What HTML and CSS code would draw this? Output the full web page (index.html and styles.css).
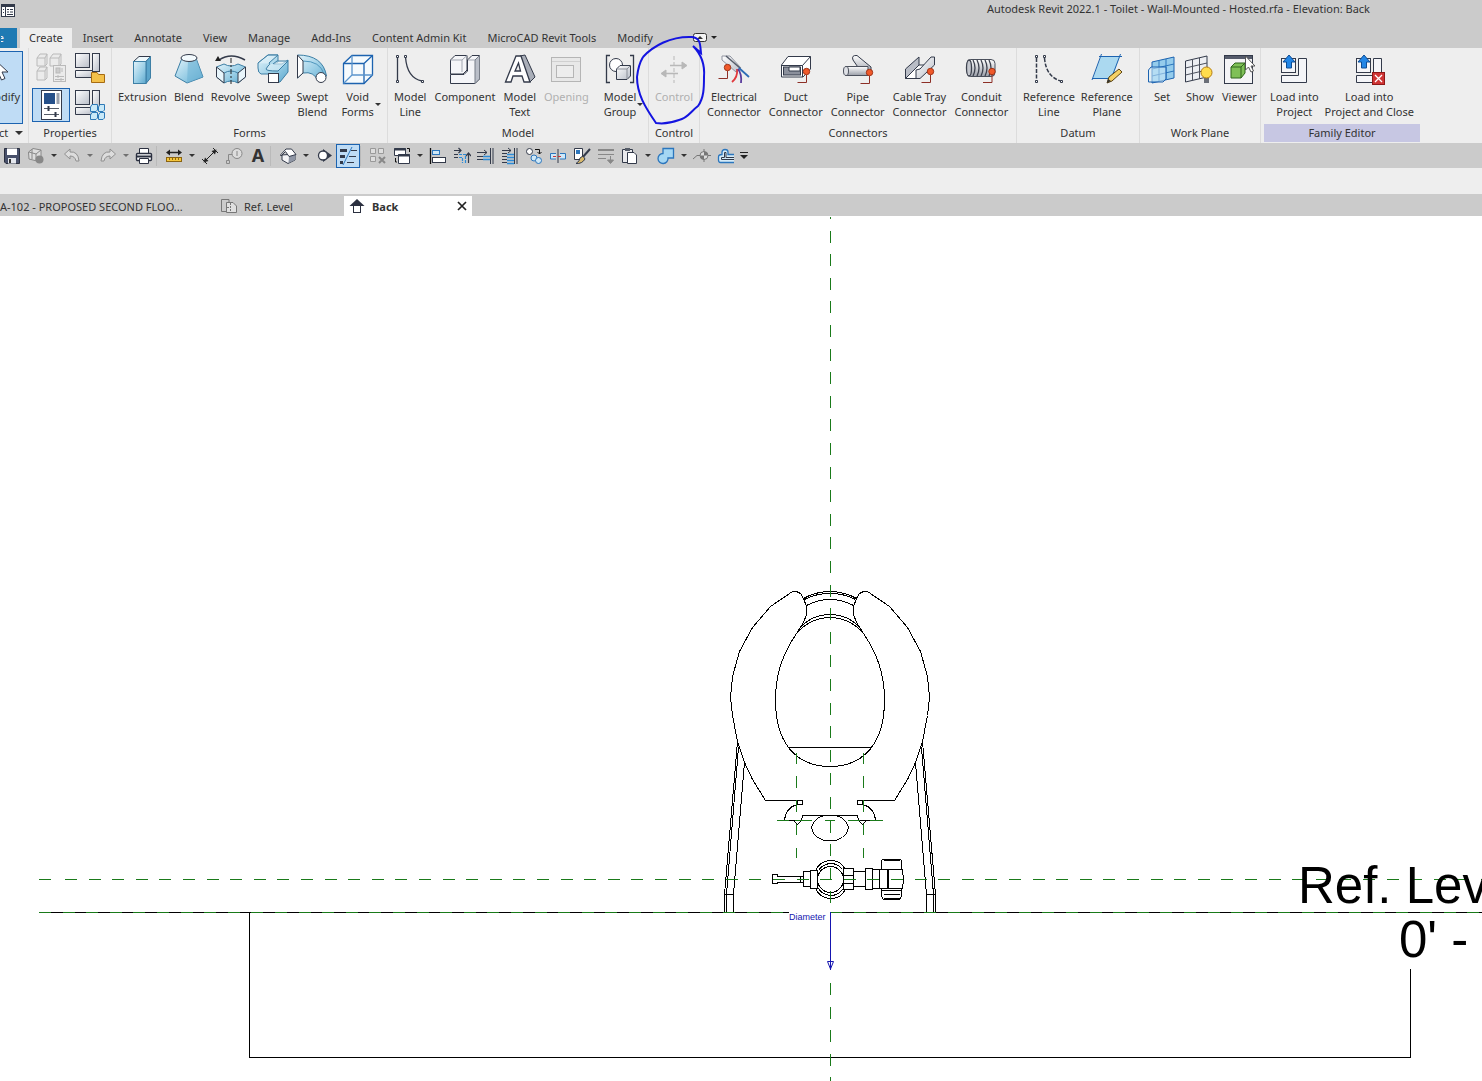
FILE: index.html
```
<!DOCTYPE html>
<html lang="en">
<head>
    <meta charset="UTF-8">
    <meta name="viewport" content="width=device-width, initial-scale=1.0">
    <title>Autodesk Revit 2022.1 - Toilet - Wall-Mounted - Hosted.rfa - Elevation: Back</title>
    <link rel="stylesheet" href="styles.css">
</head>
<body>
    <!-- shared gradients and the connector pin -->
    <svg class="defs" width="0" height="0" aria-hidden="true">
        <defs>
            <linearGradient id="blue" x1="0" y1="0" x2="1" y2="1">
                <stop offset="0" stop-color="#e2f3fa"/>
                <stop offset="0.6" stop-color="#94cbe4"/>
                <stop offset="1" stop-color="#5ca7cd"/>
            </linearGradient>
            <linearGradient id="grey" x1="0" y1="0" x2="1" y2="1">
                <stop offset="0" stop-color="#ffffff"/>
                <stop offset="1" stop-color="#b9bec8"/>
            </linearGradient>
            <linearGradient id="tube" x1="0" y1="0" x2="0" y2="1">
                <stop offset="0" stop-color="#ffffff"/>
                <stop offset="1" stop-color="#9a9ea8"/>
            </linearGradient>
            <g id="pin">
                <path d="M0 3V11H-9" fill="none" stroke="#8d2f26"/>
                <circle r="3.2" fill="#f0592a" stroke="#a03418"/>
            </g>
        </defs>
    </svg>

    <header class="title-bar">
        <svg class="app-icon" width="14" height="14" viewBox="0 0 14 14"><rect x="0.5" y="0.5" width="13" height="12" fill="#fff" stroke="#333a4a"/><path d="M0 2H14" stroke="#333a4a" stroke-width="2"/><path d="M4.500 3V13" stroke="#333a4a"/><path d="M2 5.500H3M2 8.500H3M6 5.500H8M9 5.500H12M6 8H8M9 8H12M6 10.500H12" stroke="#333a4a"/></svg>
        <span>Autodesk Revit 2022.1 - Toilet - Wall-Mounted - Hosted.rfa - Elevation: Back</span>
    </header>

    <nav class="ribbon-tabs">
        <button class="ribbon-tab file">File</button>
        <button class="ribbon-tab active">Create</button>
        <button class="ribbon-tab">Insert</button>
        <button class="ribbon-tab">Annotate</button>
        <button class="ribbon-tab">View</button>
        <button class="ribbon-tab">Manage</button>
        <button class="ribbon-tab">Add-Ins</button>
        <button class="ribbon-tab">Content Admin Kit</button>
        <button class="ribbon-tab">MicroCAD Revit Tools</button>
        <button class="ribbon-tab">Modify</button>
        <button class="ribbon-toggle" aria-label="Minimize ribbon">
            <svg width="24" height="10" viewBox="0 0 24 10"><rect x="0.5" y="0.5" width="13" height="8" rx="2" fill="#f4f4f4" stroke="#333"/><path d="M4 6L7 3L10 6Z" fill="#333"/><path d="M18 3H24L21 6Z" fill="#222"/></svg>
        </button>
    </nav>

    <main class="ribbon">
        <section class="panel select">
            <div class="tools">
                <button class="tool checked">
                    <svg width="32" height="32" viewBox="0 0 32 32"><path d="M8 6V24L12.500 20L15.500 27L19 25.500L16 19H22Z" fill="#fff" stroke="#333a4a"/></svg>
                    <span>Modify</span>
                </button>
            </div>
            <h2>Select <i class="caret wide"></i></h2>
        </section>

        <section class="panel properties">
            <div class="tools">
                <button class="small-tool" aria-label="Type properties" disabled>
                    <svg width="32" height="32" viewBox="0 0 32 32"><g fill="#ebebeb" stroke="#bababa"><path d="M2 6L5 2H12V12L10 14H2ZM15 6L18 2H26V12L24 14H15ZM2 19L5 15H12V26L10 28H2Z"/><path d="M2 6H10V14M10 6L12 2M15 6H24V14M24 6L26 2M2 19H10V28M10 19L12 15" fill="none"/><rect x="18.500" y="13.500" width="12" height="16"/><path d="M20 24.500H29M20 27.500H29M23 23V26M26 26V29M27 16V20"/><rect x="21" y="16" width="4" height="5" fill="#ccc"/></g></svg>
                </button>
                <button class="small-tool" aria-label="Family category">
                    <svg width="32" height="32" viewBox="0 0 32 32"><g fill="url(#grey)" stroke="#333a4a"><rect x="1.500" y="1.500" width="14" height="14"/><rect x="18.500" y="1.500" width="7" height="18"/><path d="M1.500 18.500H18.500V25.500H1.500Z"/></g><path d="M17.500 20.500H23L24.500 22.500H30.500V30.500H17.500Z" fill="#f4c14a" stroke="#a66b12"/></svg>
                </button>
                <button class="small-tool checked" aria-label="Properties">
                    <svg width="32" height="32" viewBox="0 0 32 32"><rect x="6.500" y="1.500" width="20" height="29" fill="#fff" stroke="#333a4a"/><rect x="9" y="4" width="11" height="11" fill="#25508a"/><rect x="21.500" y="4" width="3" height="11" fill="#9aa1ad"/><path d="M9 19.500H24M9 25.500H24" stroke="#555c68"/><path d="M13.500 17V22M20.500 23V28" stroke="#333a4a" stroke-width="2"/></svg>
                </button>
                <button class="small-tool" aria-label="Family types">
                    <svg width="32" height="32" viewBox="0 0 32 32"><g fill="url(#grey)" stroke="#333a4a"><rect x="1.500" y="1.500" width="14" height="14"/><rect x="18.500" y="1.500" width="7" height="18"/><path d="M1.500 18.500H18.500V25.500H1.500Z"/></g><g fill="#c9e9f8" stroke="#2e7ab8"><path d="M16.500 18L18 15.500H23.500V21L22 22.500H16.500ZM24.500 18L26 15.500H30.500V21L29 22.500H24.500ZM16.500 26L18 23.500H23.500V29L22 30.500H16.500ZM24.500 26L26 23.500H30.500V29L29 30.500H24.500Z"/></g></svg>
                </button>
            </div>
            <h2>Properties</h2>
        </section>

        <section class="panel forms">
            <div class="tools">
                <button class="tool">
                    <svg width="32" height="32" viewBox="0 0 32 32"><path d="M7.500 8.500L13 3.500H24.500L20 8.500Z" fill="#eef8fc" stroke="#333a4a"/><path d="M20 8.500L24.500 3.500V25L20 30.500Z" fill="#5ba5cb" stroke="#3d7fa5"/><rect x="7.500" y="8.500" width="12.500" height="22" fill="url(#blue)" stroke="#3d7fa5"/></svg>
                    <span>Extrusion</span>
                </button>
                <button class="tool">
                    <svg width="32" height="32" viewBox="0 0 32 32"><path d="M9 5L2 23L14 30L30 24L23 5Z" fill="url(#blue)" stroke="#3d7fa5"/><path d="M15 8L14 30L30 24L23 5Z" fill="#6fb4d6" opacity="0.6"/><ellipse cx="16" cy="5" rx="8" ry="3.500" fill="#f3fafd" stroke="#333a4a"/></svg>
                    <span>Blend</span>
                </button>
                <button class="tool">
                    <svg width="32" height="32" viewBox="0 0 32 32"><path d="M1.500 14L9 11Q16 15 23 11L30.500 14V24L23 30Q16 26 9 30L1.500 24Z" fill="url(#blue)" stroke="#3d7fa5"/><path d="M9 20Q16 16 23 20" fill="none" stroke="#3d7fa5"/><path d="M1.500 14L9 20V30L1.500 24ZM30.500 14L23 20V30L30.500 24Z" fill="#e8f5fb" stroke="#333a4a"/><path d="M4 7Q16 -1 30 7" fill="none" stroke="#333a4a" stroke-width="1.500"/><path d="M0 8L3 3L6 8Z" fill="#222"/><path d="M16 5V31" stroke="#222" stroke-dasharray="5 2 2 2"/></svg>
                    <span>Revolve</span>
                </button>
                <button class="tool">
                    <svg width="32" height="32" viewBox="0 0 32 32"><path d="M12 21H4Q1 20 1 15V10L11 2H21V9L17 11H25L31 7V19L23 29H12Z" fill="url(#blue)" stroke="#3d7fa5"/><path d="M1 10L11 2H21L12 10Q14 11 11 13L9 16Q9 18 21 18L31 8H20L16 11" fill="#e5f4fa" fill-opacity="0.600" stroke="#3d7fa5"/><rect x="11.500" y="20.500" width="10" height="9" fill="#fff" stroke="#333a4a"/></svg>
                    <span>Sweep</span>
                </button>
                <button class="tool">
                    <svg width="32" height="32" viewBox="0 0 32 32"><path d="M1.500 2Q27 2 30.500 23L22 28Q18 18 7 20L1.500 25Z" fill="url(#blue)" stroke="#3d7fa5"/><path d="M7 8Q24 8 28 21" fill="none" stroke="#4f96bd"/><path d="M1.500 2L7 8V20L1.500 25Z" fill="#fff" stroke="#333a4a"/><circle cx="25" cy="24.500" r="5" fill="#fff" stroke="#333a4a"/></svg>
                    <span>Swept<br>Blend</span>
                </button>
                <button class="tool drop">
                    <svg width="32" height="32" viewBox="0 0 32 32"><g fill="none" stroke="#1c63b0" stroke-width="1.300"><path d="M1.500 10.500L10 2.500H30.500V22L22 30.500H1.500Z" fill="#f5fafd"/><path d="M1.500 10.500H22V30.500M22 10.500L30.500 2.500"/><path d="M10 2.500V22H30.500M10 22L1.500 30.500" stroke="#5a94cc"/></g></svg>
                    <span>Void<br>Forms</span>
                    <i class="caret"></i>
                </button>
            </div>
            <h2>Forms</h2>
        </section>

        <section class="panel model">
            <div class="tools">
                <button class="tool">
                    <svg width="32" height="32" viewBox="0 0 32 32"><g fill="none" stroke="#333a4a"><path d="M3.500 4V28M11.500 4Q13 25 28 28" stroke-width="1.300"/><path d="M2.500 2.500h2v2h-2zM2.500 27.500h2v2h-2zM10.500 2.500h2v2h-2zM27.500 27.500h2v2h-2z" fill="#fff"/></g></svg>
                    <span>Model<br>Line</span>
                </button>
                <button class="tool">
                    <svg width="32" height="32" viewBox="0 0 32 32"><path d="M1.500 7L6 2.500H18V17L14 21H1.500Z" fill="#f4f5f8" stroke="#333a4a"/><path d="M1.500 7H13L18 2.500M13 7V19" fill="none" stroke="#a2a7b1"/><path d="M1.500 21.500H15L18.500 18V7L23 2.500H30.500V26L26 30.500H1.500Z" fill="#f4f5f8" stroke="#333a4a"/><path d="M26 7L30.500 2.500V26L26 30.500Z" fill="#b9bec8" stroke="#777d88"/><path d="M19 7H26" stroke="#a2a7b1"/></svg>
                    <span>Component</span>
                </button>
                <button class="tool">
                    <svg width="32" height="32" viewBox="0 0 32 32"><path d="M16 3L21 2L31 24L26 29Z" fill="#a9aeb8" stroke="#333a4a"/><path fill-rule="evenodd" d="M1.500 29L12 3H17L26 29H20L18 23H9L7 29ZM11 18H16.500L14.500 10Z" fill="#fff" stroke="#333a4a" stroke-width="1.300"/></svg>
                    <span>Model<br>Text</span>
                </button>
                <button class="tool" disabled>
                    <svg width="32" height="32" viewBox="0 0 32 32"><rect x="1.500" y="4.500" width="29" height="24" fill="#e8e8e8" stroke="#b5b5b5"/><path d="M2 8.500H30" stroke="#d0d0d0"/><rect x="6.500" y="12.500" width="17" height="12" fill="#ededed" stroke="#b5b5b5"/></svg>
                    <span>Opening</span>
                </button>
                <button class="tool drop">
                    <svg width="32" height="32" viewBox="0 0 32 32"><path d="M6 2.500H2.500V29.500H6M26 2.500H29.500V29.500H26" fill="none" stroke="#333a4a" stroke-width="1.300"/><circle cx="12" cy="12" r="6.500" fill="#fff" stroke="#333a4a"/><path d="M12.500 16L16 12.500H26.500V23L23 26.500H12.500Z" fill="url(#grey)" stroke="#333a4a"/><path d="M12.500 16H23V26M23 16L26.500 12.500" fill="none" stroke="#8a8f99"/></svg>
                    <span>Model<br>Group</span>
                    <i class="caret"></i>
                </button>
            </div>
            <h2>Model</h2>
        </section>

        <section class="panel control">
            <div class="tools">
                <button class="tool" disabled>
                    <svg width="32" height="32" viewBox="0 0 32 32"><g stroke="#b8b8b8" fill="#b8b8b8"><path d="M16 3V30" stroke-dasharray="4 2"/><path d="M12 12.500H25M7 20.500H20" stroke-width="1.500"/><path d="M24 9L29 12.500L24 16ZM8 17L3 20.500L8 24Z"/></g></svg>
                    <span>Control</span>
                </button>
            </div>
            <h2>Control</h2>
            <!-- pen mark round the Control tool -->
            <svg class="pen-mark" width="74" height="94" viewBox="634 34 74 94"><path d="M643 57C653 46 671 36 692 37C701 38 700 45 701 53L693 46C701 54 705 65 704 77C704 87 704 98 698 106C690 112 688 118 679 120C671 123 663 124 656 123C645 107 637 94 637 77C638 68 640 62 643 57" fill="none" stroke="#1414e0" stroke-width="2"/></svg>
        </section>

        <section class="panel connectors">
            <div class="tools">
                <button class="tool">
                    <svg width="32" height="32" viewBox="0 0 32 32"><path d="M4 3H12L23 15L18 19L4 7Z" fill="url(#grey)" stroke="#9094a0"/><path d="M8 3L22 15" stroke="#555c68" stroke-width="1.500"/><g fill="none" stroke-width="1.800"><path d="M19 16Q20 24 14 29" stroke="#e0393d"/><path d="M20 16Q24 21 23 30" stroke="#5a3d9d"/><path d="M21 15L31 24" stroke="#2d6db5"/></g><use href="#pin" x="9.500" y="14.500"/></svg>
                    <span>Electrical<br>Connector</span>
                </button>
                <button class="tool">
                    <svg width="32" height="32" viewBox="0 0 32 32"><path d="M1.500 12L8 3.500H30.500V16L23 24H1.500Z" fill="#fff" stroke="#333a4a"/><path d="M1.500 12.500H22.500V24M22.500 12.500L30.500 3.500" fill="none" stroke="#333a4a"/><rect x="3.500" y="14" width="17" height="8" fill="#8b909c" stroke="#333a4a"/><path d="M9 14H20V18H9Z" fill="#fff" stroke="#333a4a"/><use href="#pin" x="26.500" y="18.500"/></svg>
                    <span>Duct<br>Connector</span>
                </button>
                <button class="tool">
                    <svg width="32" height="32" viewBox="0 0 32 32"><path d="M11 7Q9 2 15 2.500L29 14V20H20Z" fill="url(#tube)" stroke="#333a4a"/><path d="M4 13.500H26V22.500H4Z" fill="url(#tube)" stroke="#4b505c"/><ellipse cx="4" cy="18" rx="2.500" ry="4.500" fill="#dfe1e6" stroke="#4b505c"/><use href="#pin" x="27.500" y="19.500"/></svg>
                    <span>Pipe<br>Connector</span>
                </button>
                <button class="tool">
                    <svg width="32" height="32" viewBox="0 0 32 32"><path d="M1.500 16L15 4V12L6 22L1.500 25.500Z" fill="#b9bdc6" stroke="#333a4a"/><path d="M1.500 25.500L15 12H22L12 25.500Z" fill="#fff" stroke="#333a4a"/><path d="M12 17V25.500H16L30.500 12V4H27L16 16Z" fill="url(#grey)" stroke="#333a4a"/><use href="#pin" x="26.500" y="18.500"/></svg>
                    <span>Cable Tray<br>Connector</span>
                </button>
                <button class="tool">
                    <svg width="32" height="32" viewBox="0 0 32 32"><rect x="2" y="6.500" width="28" height="17" rx="4" fill="url(#tube)" stroke="#4b505c"/><g fill="none" stroke="#3d424e" stroke-width="1.300"><ellipse cx="4" cy="15" rx="2.500" ry="8" fill="#c5c8cf"/><path d="M8 7Q12 15 8 23M12 7Q16 15 12 23M16 7Q20 15 16 23M20 7Q24 15 20 23M24 7Q28 15 24 23"/></g><use href="#pin" x="27" y="18.500"/></svg>
                    <span>Conduit<br>Connector</span>
                </button>
            </div>
            <h2>Connectors</h2>
        </section>

        <section class="panel datum">
            <div class="tools">
                <button class="tool">
                    <svg width="32" height="32" viewBox="0 0 32 32"><g fill="none" stroke="#333a4a"><path d="M3.500 5V28M11.500 5Q13 24 28 28" stroke-width="1.500" stroke-dasharray="4 1.500"/><path d="M2.500 2.500h2v2h-2zM2.500 27.500h2v2h-2zM10.500 2.500h2v2h-2zM27.500 27.500h2v2h-2z" fill="#fff"/></g></svg>
                    <span>Reference<br>Line</span>
                </button>
                <button class="tool">
                    <svg width="32" height="32" viewBox="0 0 32 32"><path d="M10 3.500H29L21 25.500H2Z" fill="#abd9f0"/><path d="M8 3.500H31M1 25.500H20M10.500 1L1 27M29.500 1L22 21" stroke="#1c63b0"/><path d="M16 30L18 24L28 16L31 19L21 28Z" fill="#f6d265" stroke="#5b4312"/><path d="M16 30L17 26L20 28Z" fill="#333"/></svg>
                    <span>Reference<br>Plane</span>
                </button>
            </div>
            <h2>Datum</h2>
        </section>

        <section class="panel work-plane">
            <div class="tools">
                <button class="tool">
                    <svg width="32" height="32" viewBox="0 0 32 32"><path d="M6 9L28 4V25L6 30Z" fill="#94ccec" stroke="#1c63b0"/><path d="M13 7V28M20 6V27M6 16L28 11M6 23L28 18" stroke="#2b76bd"/><path d="M2.500 17L5 14H20V26L17 29H2.500Z" fill="#d5eefa" fill-opacity="0.500" stroke="#1c63b0"/></svg>
                    <span>Set</span>
                </button>
                <button class="tool">
                    <svg width="32" height="32" viewBox="0 0 32 32"><path d="M1.500 8L23 3V24L1.500 29Z" fill="#eceef2" stroke="#333a4a"/><path d="M8.500 6.500V27M15.500 5V26M1.500 15L23 10M1.500 22L23 17" stroke="#4b505c"/><rect x="20" y="24" width="5" height="6" fill="#6b6f78"/><circle cx="22.500" cy="19.500" r="5.500" fill="#ffdc4d" stroke="#b57d13"/></svg>
                    <span>Show</span>
                </button>
                <button class="tool">
                    <svg width="32" height="32" viewBox="0 0 32 32"><rect x="1.500" y="2.500" width="28" height="28" fill="#f4f4f6" stroke="#333a4a"/><rect x="2" y="3" width="27" height="3" fill="#555b6b"/><path d="M8 14L12 10H22V20L18 25H8Z" fill="#7fc057" stroke="#2f641c"/><path d="M8 14H18V25M18 14L22 10" fill="none" stroke="#2f641c"/><path d="M22.500 3V17L25.500 14L28 19L30.500 18L28 13H32Z" fill="#fff" stroke="#555"/></svg>
                    <span>Viewer</span>
                </button>
            </div>
            <h2>Work Plane</h2>
        </section>

        <section class="panel family">
            <div class="tools">
                <button class="tool">
                    <svg width="32" height="32" viewBox="0 0 32 32"><g fill="#f4f5f8" stroke="#333a4a"><rect x="3.500" y="5.500" width="14" height="14"/><path d="M3.500 22.500H20.500V5.500H28.500V29.500H3.500Z"/></g><path d="M11 2L17 9H13.500V15H8.500V9H5Z" fill="#2286e6" stroke="#0d4c94"/></svg>
                    <span>Load into<br>Project</span>
                </button>
                <button class="tool">
                    <svg width="32" height="32" viewBox="0 0 32 32"><g fill="#f4f5f8" stroke="#333a4a"><rect x="3.500" y="5.500" width="14" height="14"/><path d="M3.500 22.500H20.500V5.500H28.500V29.500H3.500Z"/></g><path d="M11 2L17 9H13.500V15H8.500V9H5Z" fill="#2286e6" stroke="#0d4c94"/><rect x="19.500" y="19.500" width="12" height="12" fill="#cf3434" stroke="#8e1717"/><path d="M22 22L29 29M29 22L22 29" stroke="#fff" stroke-width="1.300"/></svg>
                    <span>Load into<br>Project and Close</span>
                </button>
            </div>
            <h2>Family Editor</h2>
        </section>
    </main>

    <div class="quick-bar">
        <button aria-label="Save"><svg viewBox="0 0 18 18"><path d="M1.500 1.500H16.500V16.500H3L1.500 15Z" fill="#48506a" stroke="#2b3040"/><path d="M4 1.500H14V8H4Z" fill="#fff"/><path d="M5 11H13V16.500H5Z" fill="#e5e8ee"/><path d="M7 12V16" stroke="#333" stroke-width="2"/></svg></button>
        <button aria-label="Synchronize" disabled><svg viewBox="0 0 18 18"><path d="M1.500 5L6 1.500L14 3V10L10 14L2 12Z" fill="#ddd" stroke="#888"/><path d="M2 5L9 7L14 3M9 7V13M5 2V12" fill="none" stroke="#888"/><circle cx="12.500" cy="12.500" r="4" fill="#888"/></svg></button>
        <button class="arrow" aria-label="Synchronize options"><i class="caret"></i></button>
        <button aria-label="Undo" disabled><svg viewBox="0 0 18 18"><path d="M1.500 7L7 2V5Q15 4 16 14H13Q12 9 7 9V12Z" fill="#ddd" stroke="#909090"/></svg></button>
        <button class="arrow" aria-label="Undo list" disabled><i class="caret"></i></button>
        <button aria-label="Redo" disabled><svg viewBox="0 0 18 18"><path d="M16.500 7L11 2V5Q3 4 2 14H5Q6 9 11 9V12Z" fill="#ddd" stroke="#909090"/></svg></button>
        <button class="arrow" aria-label="Redo list" disabled><i class="caret"></i></button>
        <button aria-label="Print"><svg viewBox="0 0 18 18"><path d="M4.500 6V1.500H13.500V6" fill="#fff" stroke="#2b3040"/><rect x="1.500" y="6.500" width="15" height="7" rx="1" fill="#fff" stroke="#2b3040" stroke-width="1.400"/><path d="M2 9.500H16" stroke="#2b3040" stroke-width="2"/><path d="M4.500 11.500H13.500V16.500H4.500Z" fill="#fff" stroke="#2b3040"/></svg></button>
        <span class="divider"></span>
        <button aria-label="Measure"><svg viewBox="0 0 18 18"><path d="M3 5.500H15" stroke="#222" stroke-width="1.500"/><path d="M1 5.500L5 2.500V8.500ZM17 5.500L13 2.500V8.500Z" fill="#222"/><rect x="1.500" y="10.500" width="15" height="4" fill="#f5c63c" stroke="#8b6411"/><path d="M4.500 11V13M7.500 11V13M10.500 11V13M13.500 11V13" stroke="#8b6411"/></svg></button>
        <button class="arrow" aria-label="Measure options"><i class="caret"></i></button>
        <button aria-label="Aligned dimension"><svg viewBox="0 0 18 18"><path d="M4 14L14 4M1 12L6 17M12 1L17 6" stroke="#222"/><path d="M2.500 15.500L4 10.500L7.500 14ZM15.500 2.500L14 7.500L10.500 4Z" fill="#222"/></svg></button>
        <button aria-label="Tag" disabled><svg viewBox="0 0 18 18"><circle cx="12" cy="6.500" r="5" fill="#ddd" stroke="#888"/><path d="M12 4V9M7 7.500H3.500V13M1.500 13.500h3v3h-3z" fill="none" stroke="#888"/></svg></button>
        <button class="text-tool">A</button>
        <span class="divider"></span>
        <button aria-label="3D view"><svg viewBox="0 0 18 18"><path d="M3 8V13L9 16.500L16 13V7Z" fill="#f4f4f6" stroke="#333a4a"/><path d="M10 9L16 7V13L9.500 16Z" fill="#8f96a5"/><path d="M1.500 8L7 2H12.500L17 7.500L10 9.500L6.500 4.500L2 9Z" fill="#fff" stroke="#333a4a"/></svg></button>
        <button class="arrow" aria-label="3D view options"><i class="caret"></i></button>
        <button aria-label="Section"><svg viewBox="0 0 18 18"><path d="M8 2L17 8.500L8 15Z" fill="#333a4a"/><circle cx="8" cy="8.500" r="4.500" fill="#fff" stroke="#333a4a" stroke-width="1.300"/></svg></button>
        <button class="checked" aria-label="Thin lines"><svg viewBox="0 0 18 18"><path d="M1 3.500H8M1 9.500H6M1 15.500H4" stroke="#333a4a" stroke-width="3"/><path d="M12 3.500H18M10 9.500H17M8 15.500H15" stroke="#333a4a"/><path d="M13 0L4 18" stroke="#2b76bd"/></svg></button>
        <span class="divider"></span>
        <button aria-label="Close inactive" disabled><svg viewBox="0 0 18 18"><g fill="#ddd" stroke="#999"><path d="M1.500 1.500h5v5h-5zM9.500 1.500h5v5h-5zM1.500 9.500h5v5h-5z"/></g><path d="M10 10L16 16M16 10L10 16" stroke="#888" stroke-width="2"/></svg></button>
        <button aria-label="Switch windows"><svg viewBox="0 0 18 18"><path d="M1.500 1.500H12.500V8.500H1.500ZM5.500 7.500H16.500V16.500H5.500Z" fill="#fff" stroke="#333a4a"/><path d="M1 2.500H13M5 8.500H17" stroke="#333a4a" stroke-width="2"/><path d="M14 1.500H16.500V5M2.500 11V15H4" fill="none" stroke="#111"/></svg></button>
        <button class="arrow" aria-label="Window list"><i class="caret"></i></button>
        <button aria-label="Align"><svg viewBox="0 0 18 18"><path d="M1.500 1V17" stroke="#111" stroke-width="1.300"/><rect x="3.500" y="3.500" width="7" height="4" fill="#cfe8f7" stroke="#2b76bd"/><rect x="3.500" y="10.500" width="13" height="5" fill="#fff" stroke="#333a4a"/></svg></button>
        <button aria-label="Trim to corner"><svg viewBox="0 0 18 18"><path d="M1 3.500H8M1 7.500H5M1 10.500H5M5.500 1L8 3.500L5.500 6" fill="none" stroke="#333a4a" stroke-width="1.200"/><path d="M6 7.500H12.500V16M6 10.500H9.500V16" fill="none" stroke="#2b8bd8" stroke-width="1.200" stroke-dasharray="3 1"/><path d="M15.500 16V6M13 9L15.500 6L18 9" fill="none" stroke="#333a4a" stroke-width="1.200"/></svg></button>
        <button aria-label="Trim single"><svg viewBox="0 0 18 18"><path d="M0 5.500H10M7 3L10 5.500L7 8M13.500 1V17M16 1V17M0 9.500H6M0 12.500H6" fill="none" stroke="#333a4a"/><path d="M6 9.500H13M6 12.500H13" stroke="#2b8bd8" stroke-width="1.500"/></svg></button>
        <button aria-label="Trim multiple"><svg viewBox="0 0 18 18"><path d="M1 3.500H10M7 1L10 3.500L7 6M13.500 1V17M16 1V17M1 6.500H6M1 9.500H6M1 12.500H6M1 15.500H6" fill="none" stroke="#333a4a"/><path d="M6 7.500H13M6 10.500H13M6 13.500H13M6 16.500H13" stroke="#2b8bd8" stroke-width="1.500"/></svg></button>
        <button aria-label="Copy"><svg viewBox="0 0 18 18"><circle cx="4.500" cy="4.500" r="3" fill="#fff" stroke="#333a4a"/><circle cx="9" cy="11" r="3" fill="#cfe8f7" stroke="#2b76bd"/><circle cx="13.500" cy="13.500" r="3" fill="#cfe8f7" stroke="#2b76bd"/><path d="M10 2.500H14.500V7M12.500 5L14.500 7L16.500 5" fill="none" stroke="#111"/></svg></button>
        <button aria-label="Split"><svg viewBox="0 0 18 18"><path d="M7 6.500H1.500V12H7M11 6.500H16.500V12H11" fill="#cfe8f7" stroke="#2b76bd"/><path d="M9 2V16" stroke="#333a4a"/><path d="M4 9.500H14" stroke="#c33" stroke-dasharray="3 2"/></svg></button>
        <button aria-label="Match type"><svg viewBox="0 0 18 18"><path d="M1.500 1.500H9.500V12.500H1.500Z" fill="#fff" stroke="#333a4a"/><path d="M3 3H7V7H3Z" fill="#2b76bd"/><path d="M17 2L9 11" stroke="#333a4a" stroke-width="2"/><path d="M10 9L12 12Q9 17 3 16.500Q7 14 7 11Z" fill="#d9b96c" stroke="#333a4a"/></svg></button>
        <button aria-label="Line style" disabled><svg viewBox="0 0 18 18"><path d="M1 3H17" stroke="#888" stroke-width="2"/><path d="M1 7.500H17M1 11.500H9" stroke="#888"/><path d="M13.500 9V13M10.500 13H16.500L13.500 16.500Z" fill="#888" stroke="#888"/></svg></button>
        <button aria-label="Paste"><svg viewBox="0 0 18 18"><path d="M1.500 2.500H11.500V15.500H1.500Z" fill="#e9e9ec" stroke="#333a4a"/><path d="M4 1H9V4H4Z" fill="#555c68"/><path d="M6.500 5.500H13L15.500 8V16.500H6.500Z" fill="#fff" stroke="#333a4a"/></svg></button>
        <button class="arrow" aria-label="Paste options"><i class="caret"></i></button>
        <button aria-label="Join"><svg viewBox="0 0 18 18"><path d="M6 1.500H16.500V11H11A5 5 0 1 1 6 6.500Z" fill="#a5d7f4" stroke="#2b76bd" stroke-width="1.300"/></svg></button>
        <button class="arrow" aria-label="Join options"><i class="caret"></i></button>
        <button aria-label="Spot elevation" disabled><svg viewBox="0 0 18 18"><path d="M0 12L4 8.500H18M11 2V15" fill="none" stroke="#777"/><circle cx="11" cy="8.500" r="4" fill="#ddd" stroke="#777"/><path d="M11 4.500A4 4 0 0 1 15 8.500H11ZM11 12.500A4 4 0 0 1 7 8.500H11Z" fill="#777"/></svg></button>
        <button aria-label="Offset"><svg viewBox="0 0 18 18"><path d="M17 15.500H3.500Q1.500 15.500 1.500 13V10Q1.500 7.500 5 7.500V5Q5 2.500 8 2.500T11 5V7.500H17" fill="#d5ebf8" stroke="#2b76bd" stroke-width="1.300"/><path d="M17 12.500H4.500V10.500H7.500V5.500H9V10.500H17" fill="none" stroke="#333a4a"/></svg></button>
        <button class="arrow" aria-label="Customize toolbar"><svg viewBox="0 0 8 8"><path d="M0 0.500H8" stroke="#222"/><path d="M0 3H8L4 7Z" fill="#222"/></svg></button>
    </div>

    <div class="options-bar"></div>

    <nav class="view-tabs">
        <button class="view-tab sheet">A-102 - PROPOSED SECOND FLOO...</button>
        <button class="view-tab">
            <svg width="16" height="16" viewBox="0 0 16 16"><path d="M0.500 1.500H8V4M0.500 1.500V13.500H5" fill="none" stroke="#777"/><path d="M5.500 4.500H12L15.500 8V14.500H5.500Z" fill="#e0e0e0" stroke="#777"/><path d="M9.500 5V14M6 9.500H9" stroke="#777" stroke-dasharray="2 1"/></svg>
            <span>Ref. Level</span>
        </button>
        <div class="view-tab active">
            <svg width="16" height="16" viewBox="0 0 16 16"><path d="M8 1L15.500 8H0.500Z" fill="#2b3040"/><rect x="4.500" y="7.500" width="7" height="7" fill="#fff" stroke="#2b3040"/></svg>
            <span>Back</span>
            <button class="close" aria-label="Close view"><svg width="10" height="10" viewBox="0 0 10 10"><path d="M1 1L9 9M9 1L1 9" stroke="#222" stroke-width="1.700"/></svg></button>
        </div>
    </nav>

    <div class="canvas">
        <svg class="drawing" viewBox="0 216 1482 865" preserveAspectRatio="xMinYMin slice">
            <defs>
                <!-- left half of the fixture, mirrored for the right one -->
                <g id="half">
                    <path d="M803.500 598.500L800.500 593.500L796.500 591.500L792.500 591.500L770.500 606.500L752.500 627.500L739.500 651.500L732.500 676.500L730.500 697.500L732.500 715.500L737.500 741.500L744.500 762.500L752.500 779.500L765.500 800.500H802.500V804.500H797.500V800.500"/>
                    <path d="M803.500 598.500L806.500 606.500L806.500 614.500L803.500 622.500L796.500 633.500C782 655 775.500 675 775.500 700C775.500 742 795 766.500 830.500 766.500"/>
                    <path d="M797.500 804.500Q785.500 807.500 784.500 820.500H801.500L802.500 815.500H830.500M794.500 821.500L797.500 824.500L800.500 821.500"/>
                    <path d="M737.500 741.500L724.500 894.500V912.500M738.500 747.500L726.500 894.500V912.500M744.500 762.500L733.500 894.500V912.500M724.500 894.500H733.500"/>
                    <path d="M803.500 598.500Q815.500 591.500 830.500 591.500M804.500 599.500Q815.500 593.500 830.500 593.500M806.500 605.500Q817.500 599.500 830.500 599.500M799.500 628.500Q811.500 614.500 830.500 614.500M796.500 633.500Q810.500 617.500 830.500 617.500"/>
                    <path d="M830.500 840.500H824.500L817.500 837.500L813.500 833.500L811.500 827.500L813.500 822.500L818.500 817.500L824.500 815.500"/>
                </g>
            </defs>
            <g class="ink">
                <use href="#half"/>
                <use href="#half" transform="matrix(-1 0 0 1 1660 0)"/>
                <path d="M788 747.500H872M39 912.500H789M830 912.500H1482M249.500 912V1057.500H1410.500V969"/>
                <!-- valve -->
                <path d="M803 876.500H778L777 874.500H772.500V883.500H777L778 882.500H803M800.500 876V882M803.500 871.500H810.500V886.500H803.500ZM810.500 870.500H817.500V888.500H810.500ZM817.500 870.500V888"/>
                <circle cx="830.500" cy="879.500" r="13"/>
                <path d="M815.500 870.500A17 18 0 0 1 845.500 869.500M815.500 888.500A17 18 0 0 0 845.500 889.500M818.500 870.500A15 16 0 0 1 842.500 869.500M818.500 888.500A15 16 0 0 0 842.500 889.500"/>
                <path d="M843.500 868.500H853.500V889.500H843.500ZM843.500 875.500H853M843.500 883.500H853M853.500 871.500H865.500V886.500H853.500M865.500 868.500H872.500V889.500H865.500ZM872.500 869.500H879.500V888.500H872.500M879.500 869.500H888.500V888.500H879.500M887.500 869.500V888M888.500 869.500H902.500L903.500 879.500L902.500 888.500H888.500"/>
                <path d="M881.500 869.500V860.500L882.500 859.500H900.500L901.500 860.500V869M881.500 888.500V896.500L883.500 899.500H899.500L901.500 896.500V888.500M881.500 890.500H901M883.500 894.500H900M883.500 898.500H900M883.500 860.500H900"/>
            </g>
            <g class="ref-plane">
                <path d="M830.500 217V219M830.500 230.500V912M830.500 983V1081"/>
                <path d="M39 879.500H53M65 879.500H1482M39 912.500H789M830 912.500H1482"/>
                <path class="solid" d="M796.500 753V764M796.500 776V788M796.500 800V812M796.500 824V835M796.500 848V858M863.500 753V764M863.500 776V788M863.500 800V812M863.500 824V835M863.500 848V858M777 820.500H789M795 820.500H812M825 820.500H835M848 820.500H860M870 820.500H883"/>
            </g>
            <path class="diameter" d="M830.500 912V970M827.500 961.500H833.500L830.500 969Z"/>
            <text class="dim-label" x="789" y="920">Diameter</text>
            <text class="level-label" x="1298" y="903">Ref. Level</text>
            <text class="level-label" x="1399" y="957">0' - 0"</text>
        </svg>
    </div>
</body>
</html>
```
FILE: styles.css
```
* {
    box-sizing: border-box;
}
body {
    margin: 0;
    height: 100vh;
    display: flex;
    flex-direction: column;
    overflow: hidden;
    background: white;
    color: #333;
    font-family: "Noto Sans", "Segoe UI", sans-serif;
    font-size: 11px;
    line-height: 15px;
}
button {
    margin: 0;
    padding: 0;
    border: 1px solid transparent;
    background: transparent;
    color: inherit;
    font: inherit;
    white-space: nowrap;
}
svg {
    display: block;
    flex: none;
}
.defs {
    position: absolute;
}

/* title bar */
.title-bar {
    display: flex;
    justify-content: space-between;
    flex: none;
    height: 28px;
    padding: 1px 112px 0 1px;
    background: #cbcbcb;
}
.app-icon {
    margin-top: 3px;
}

/* ribbon tabs */
.ribbon-tabs {
    display: flex;
    gap: 1px;
    flex: none;
    height: 20px;
    background: #cbcbcb;
}
.ribbon-tab {
    padding: 0 9px 2px;
}
.ribbon-tab.file {
    display: flex;
    justify-content: flex-end;
    align-items: center;
    width: 17px;
    margin-right: 2px;
    padding: 0 12px 2px 0;
    overflow: hidden;
    background: #1f7ab3;
    color: white;
}
.ribbon-tab.active {
    padding: 0 8px 2px;
    background: #eeeeee;
}
.ribbon-toggle {
    margin-left: 28px;
}

/* ribbon */
.ribbon {
    display: flex;
    flex: none;
    height: 95px;
    background: #eeeeee;
}
.panel {
    position: relative;
    display: flex;
    flex-direction: column;
    flex: none;
    border-right: 1px solid #dcdcdc;
}
.panel h2 {
    margin: 0;
    height: 18px;
    font-size: 11px;
    font-weight: normal;
    line-height: 17px;
    text-align: center;
    white-space: nowrap;
}
.tools {
    display: flex;
    height: 76px;
    padding: 3px 0 0 3px;
}
.tool {
    position: relative;
    display: flex;
    flex-direction: column;
    align-items: center;
    gap: 4px;
    min-width: 38px;
    height: 73px;
    padding: 1px 2px;
}
.tool.drop {
    padding: 1px 9px;
}
.tool .caret {
    position: absolute;
    right: 2px;
    top: 51px;
}
.tool:disabled {
    color: #b0b0b0;
}
.checked {
    border-color: #1c63b0;
    background: #bfdcf5;
}
.caret {
    display: inline-block;
    border: 3px solid transparent;
    border-top-color: #333;
    border-bottom: 0;
}
.caret.wide {
    border-width: 4px;
    border-bottom: 0;
    margin: 0 0 2px 4px;
}
.select {
    width: 29px;
    align-items: flex-end;
    padding-right: 5px;
    overflow: hidden;
}
.properties {
    width: 83px;
}
.properties .tools {
    display: grid;
    grid-template-columns: 38px 38px;
    grid-template-rows: 34px 34px;
    gap: 3px 1px;
}
.small-tool {
    display: flex;
    justify-content: center;
    align-items: center;
}
.forms {
    width: 276px;
}
.model {
    width: 261px;
}
.model .tools, .connectors .tools {
    gap: 2px;
}
.control {
    width: 51px;
}
.connectors {
    width: 317px;
}
.connectors .tools {
    padding-left: 4px;
}
.datum {
    width: 123px;
}
.work-plane {
    width: 121px;
}
.family {
    width: 156px;
    margin-left: 3px;
    border-right: 0;
}
.control .tools, .family .tools {
    justify-content: center;
    padding-left: 0;
}
.family h2 {
    background: #c7c7e3;
}
.pen-mark {
    position: absolute;
    left: -15px;
    top: -14px;
    z-index: 1;
}

/* quick access toolbar */
.quick-bar {
    display: flex;
    align-items: center;
    flex: none;
    height: 25px;
    background: #cbcbcb;
}
.quick-bar button {
    display: flex;
    justify-content: center;
    align-items: center;
    width: 24px;
    height: 24px;
}
.quick-bar svg {
    width: 18px;
    height: 18px;
}
.quick-bar .arrow {
    width: 12px;
}
.quick-bar .arrow svg {
    width: 8px;
    height: 8px;
}
.quick-bar .arrow:disabled {
    opacity: 0.6;
}
.quick-bar .text-tool {
    font-size: 18px;
    font-weight: bold;
}
.divider {
    width: 6px;
    height: 20px;
    border-left: 1px solid #bababa;
}

.options-bar {
    flex: none;
    height: 26px;
    background: #eeeeee;
}

/* view tabs */
.view-tabs {
    display: flex;
    align-items: flex-end;
    flex: none;
    height: 22px;
    background: #cbcbcb;
}
.view-tab {
    display: flex;
    align-items: center;
    gap: 7px;
    width: 128px;
    height: 20px;
    padding: 0 4px;
}
.view-tab.sheet {
    width: 216px;
    padding: 0;
    border-width: 0;
}
.view-tab.active {
    padding: 0 4px 0 5px;
    background: white;
    font-weight: bold;
}
.close {
    margin-left: auto;
}

/* drawing area */
.canvas {
    flex: 1;
    min-height: 0;
}
.drawing {
    width: 100%;
    height: 100%;
}
.ink path, .ink circle, #half path {
    fill: none;
    stroke: black;
    shape-rendering: crispEdges;
}
.ref-plane path {
    fill: none;
    stroke: #1a7a1a;
    stroke-dasharray: 12 11.6;
    shape-rendering: crispEdges;
}
.ref-plane .solid {
    stroke-dasharray: none;
}
.diameter {
    fill: none;
    stroke: #1515b0;
}
.dim-label {
    fill: #1515b0;
    font: 9px "Liberation Sans", Arial, sans-serif;
}
.level-label {
    fill: black;
    font: 51px "Liberation Sans", Arial, sans-serif;
}
```
